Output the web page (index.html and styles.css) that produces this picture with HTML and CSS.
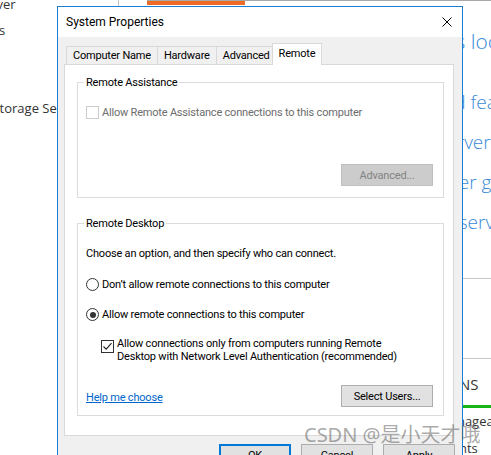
FILE: index.html
```html
<!DOCTYPE html>
<html lang="en">
<head>
    <title>Server Manager - System Properties</title>
    <link rel="stylesheet" href="styles.css">
</head>
<body>

    <div class="desktop">
        <div class="nav">
            <ul class="nav-list">
                <li>Local Server</li>
                <li>All Servers</li>
                <li>AD DS</li>
                <li>DNS</li>
                <li>File and Storage Services</li>
            </ul>
        </div>
        <div class="main">
            <div class="welcome-strip"><span class="accent"></span></div>
            <ul class="quick-start">
                <li class="quick-title">Configure this local server</li>
                <li>Add roles and features</li>
                <li>Add other servers to manage</li>
                <li>Create a server group</li>
                <li>Connect this server to cloud services</li>
            </ul>
            <div class="section-rule"></div>
            <div class="tile">
                <div class="tile-name">DNS</div>
                <div class="tile-status"></div>
                <div class="tile-row">Manageability</div>
                <div class="tile-row">Events</div>
            </div>
        </div>
    </div>

    <div class="window">
        <div class="titlebar">
            <span class="window-title">System Properties</span>
            <svg class="close-icon" width="10" height="10" viewBox="0 0 10 10">
                <path d="M0.5 0.5 L9.5 9.5 M9.5 0.5 L0.5 9.5" stroke="#000" stroke-width="1" fill="none"/>
            </svg>
        </div>
        <div class="window-body">
            <div class="tabs">
                <div class="tab">Computer Name</div>
                <div class="tab">Hardware</div>
                <div class="tab">Advanced</div>
                <div class="tab active">Remote</div>
            </div>
            <div class="tab-panel">
                <fieldset class="group">
                    <legend>Remote Assistance</legend>
                    <div class="option disabled first">
                        <span class="checkbox"></span>
                        <span>Allow Remote Assistance connections to this computer</span>
                    </div>
                    <div class="group-actions assist-actions">
                        <button class="btn" disabled>Advanced...</button>
                    </div>
                </fieldset>

                <fieldset class="group desktop-group">
                    <legend>Remote Desktop</legend>
                    <div class="intro">Choose an option, and then specify who can connect.</div>
                    <div class="option radio-first">
                        <span class="radio"></span>
                        <span>Don’t allow remote connections to this computer</span>
                    </div>
                    <div class="option radio-second">
                        <span class="radio checked"></span>
                        <span>Allow remote connections to this computer</span>
                    </div>
                    <div class="option nested">
                        <span class="checkbox checked">
                            <svg width="11" height="11" viewBox="0 0 11 11">
                                <path d="M1.5 5.5 L4.2 8.2 L9.5 2.2" stroke="#222" stroke-width="1.1" fill="none"/>
                            </svg>
                        </span>
                        <span>Allow connections only from computers running Remote<br>Desktop with Network Level Authentication (recommended)</span>
                    </div>
                    <div class="group-actions desktop-actions">
                        <a href="#" class="help-link">Help me choose</a>
                        <button class="btn">Select Users...</button>
                    </div>
                </fieldset>
            </div>
            <div class="dialog-buttons">
                <button class="btn default">OK</button>
                <button class="btn">Cancel</button>
                <button class="btn">Apply</button>
            </div>
        </div>
    </div>

    <div class="watermark">CSDN @是小天才哦</div>

</body>
</html>
```

FILE: styles.css
```css
body {
    margin: 0;
    width: 491px;
    height: 455px;
    overflow: hidden;
    position: relative;
    background-color: white;
    font-family: "Open Sans", "Liberation Sans", sans-serif;
}

/* server manager behind the dialog */
.desktop {
    display: flex;
    height: 455px;
}
.nav {
    width: 118px;
    flex-shrink: 0;
    border-right: 1px solid #c4c4c4;
    overflow: hidden;
    background-color: white;
}
.nav-list {
    list-style: none;
    margin: -9px 0 0 -58px;
    padding: 0;
    white-space: nowrap;
    font-size: 13px;
    color: #333;
}
.nav-list li {
    height: 26px;
    line-height: 26px;
}
.main {
    flex: 1;
    overflow: hidden;
    white-space: nowrap;
}
.welcome-strip {
    margin-left: 28px;
    border-top: 1px solid #a8a8a8;
    height: 4px;
}
.accent {
    display: block;
    width: 98px;
    height: 4px;
    background-color: #ee6a25;
}
.quick-start {
    list-style: none;
    margin: 16px 0 0 0;
    padding: 0 0 0 228px;
    font-size: 19px;
    font-weight: 300;
    color: #3a8ad8;
}
.quick-start li {
    height: 40px;
    line-height: 40px;
}
.quick-start .quick-title {
    margin: 0 0 21px -13px;
    font-size: 21px;
}
.section-rule {
    margin-top: 36px;
    border-top: 1px solid #c8c8c8;
}
.tile {
    margin-top: 79px;
    border-top: 1px solid #c8c8c8;
    padding-left: 319px;
    color: #333;
}
.tile-name {
    padding: 15px 0 0 10px;
    font-size: 15px;
    line-height: 20px;
}
.tile-status {
    margin-top: 11px;
    height: 3px;
    background-color: #15b615;
}
.tile-row {
    font-size: 13px;
    height: 27px;
    line-height: 27px;
}
.tile-row:first-of-type {
    margin-top: 2px;
}

/* dialog window */
.window {
    position: absolute;
    left: 57px;
    top: 6px;
    width: 406px;
    height: 470px;
    box-sizing: border-box;
    border: 1px solid #1a7fd4;
    background-color: #f0f0f0;
    font-family: Roboto, "Liberation Sans", sans-serif;
    font-size: 11px;
    letter-spacing: -0.2px;
    color: #000;
}
.titlebar {
    height: 30px;
    background-color: white;
    display: flex;
    align-items: center;
    justify-content: space-between;
    padding: 0 10px 0 8px;
}
.window-title {
    font-size: 12px;
    letter-spacing: 0;
}
.window-body {
    padding: 6px 8px 0 6px;
}
.tabs {
    display: flex;
    align-items: flex-end;
    height: 21px;
    padding-left: 2px;
}
.tab {
    position: relative;
    height: 18px;
    line-height: 17px;
    box-sizing: border-box;
    padding: 0 6px;
    border: 1px solid #d9d9d9;
    border-bottom: none;
    background-color: #f0f0f0;
    margin-right: -1px;
}
.tab.active {
    height: 22px;
    line-height: 19px;
    margin: 0 -1px -1px -4px;
    padding: 0 6px;
    background-color: white;
    z-index: 1;
}
.tab-panel {
    width: 390px;
    height: 372px;
    box-sizing: border-box;
    border: 1px solid #d9d9d9;
    background-color: white;
    padding: 11px 9px 0 12px;
}
.group {
    margin: 0;
    min-width: 0;
    border: 1px solid #dcdcdc;
    padding: 0 10px 11px 8px;
}
.group legend {
    padding: 0 2px;
    margin-left: -2px;
    line-height: 13px;
}
.desktop-group {
    margin-top: 19px;
    padding-bottom: 8px;
}
.option {
    display: flex;
    align-items: center;
    gap: 3px;
    line-height: 13px;
}
.option.first {
    margin-top: 17px;
}
.option.disabled {
    color: #6d6d6d;
}
.intro {
    margin-top: 17px;
    line-height: 13px;
}
.radio-first {
    margin-top: 18px;
}
.radio-second {
    margin-top: 17px;
}
.option.nested {
    margin-top: 16px;
    margin-left: 15px;
    align-items: flex-start;
}
.checkbox, .radio {
    width: 13px;
    height: 13px;
    box-sizing: border-box;
    border: 1px solid #333;
    background-color: white;
    flex-shrink: 0;
    display: flex;
    align-items: center;
    justify-content: center;
}
.option.disabled .checkbox {
    border-color: #cccccc;
}
.nested .checkbox {
    margin-top: 3px;
}
.radio {
    border-radius: 50%;
}
.radio.checked::after {
    content: "";
    width: 6px;
    height: 6px;
    border-radius: 50%;
    background-color: #333;
}
.group-actions {
    display: flex;
    align-items: center;
    justify-content: flex-end;
}
.assist-actions {
    margin-top: 45px;
}
.desktop-actions {
    margin-top: 22px;
    justify-content: space-between;
}
.help-link {
    color: #0066cc;
    margin-top: 3px;
}
.btn {
    width: 92px;
    height: 22px;
    padding: 0;
    border: 1px solid #adadad;
    background-color: #e1e1e1;
    font-family: Roboto, "Liberation Sans", sans-serif;
    font-size: 11px;
    letter-spacing: -0.2px;
    color: #000;
}
.btn:disabled {
    background-color: #cccccc;
    border-color: #bfbfbf;
    color: #838383;
}
.dialog-buttons {
    display: flex;
    justify-content: flex-end;
    gap: 10px;
    margin: 8px -1px 0 0;
}
.dialog-buttons .btn {
    width: 72px;
    height: 23px;
}
.dialog-buttons .btn.default {
    border: 2px solid #0078d7;
}

.watermark {
    position: absolute;
    left: 304px;
    top: 424px;
    font-family: "Noto Sans", "Noto Sans CJK SC", sans-serif;
    font-size: 20px;
    line-height: 22px;
    color: rgba(95, 95, 95, 0.55);
    white-space: nowrap;
}
```
